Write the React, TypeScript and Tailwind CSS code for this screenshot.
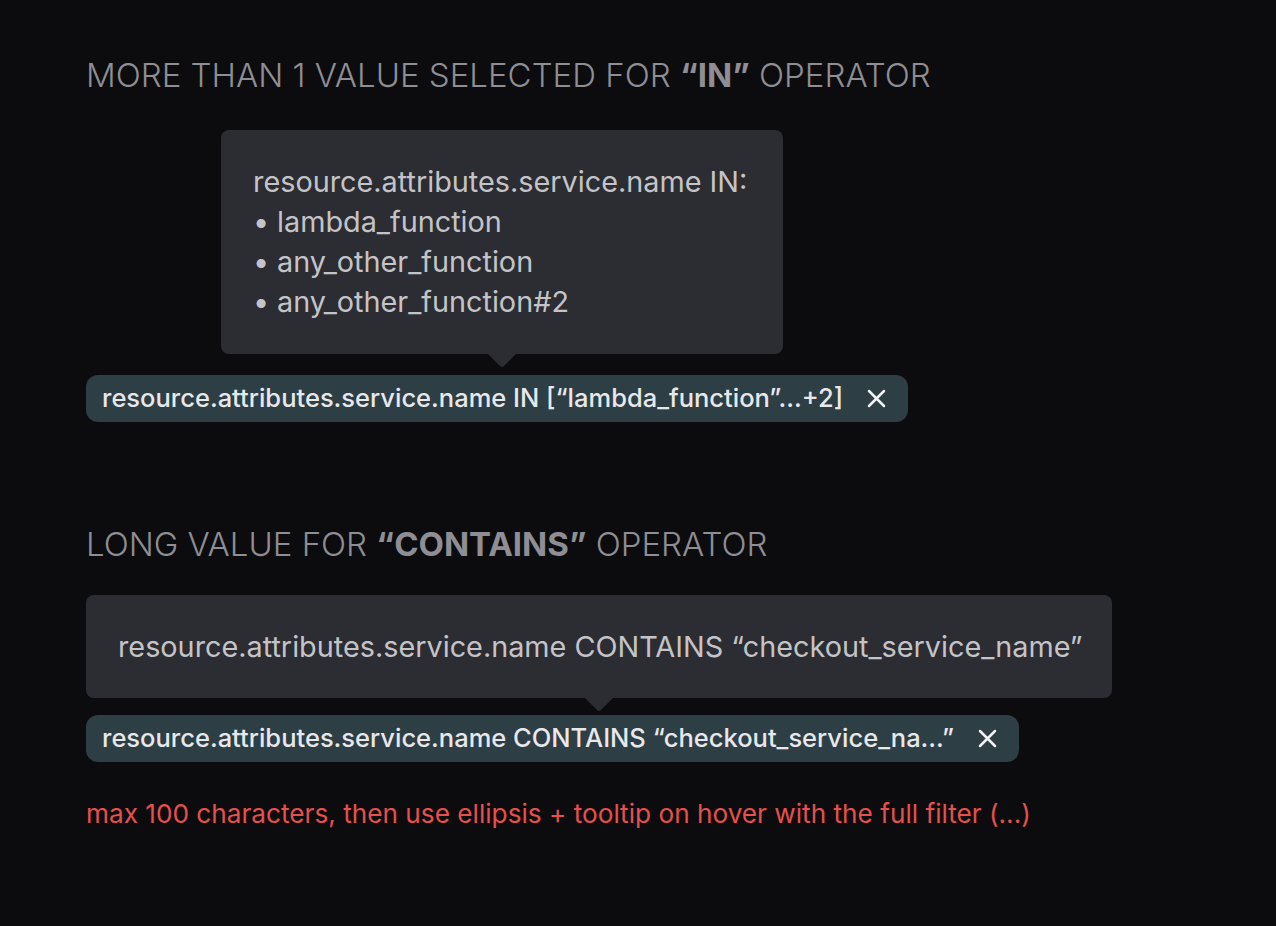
import React from 'react';

function Arrow() {
  return (
    <svg
      className="absolute left-1/2 -translate-x-1/2 top-full"
      width="28"
      height="14"
      viewBox="0 0 28 14"
    >
      <path d="M0 0 L28 0 L16 12 Q14 14 12 12 Z" fill="#2c2d32" />
    </svg>
  );
}

function CloseIcon() {
  return (
    <svg width="19" height="19" viewBox="0 0 19 19" className="shrink-0">
      <path d="M2 2 L17 17 M17 2 L2 17" stroke="#f2f2f4" strokeWidth="2.5" strokeLinecap="round" />
    </svg>
  );
}

function Chip({ children }: { children: React.ReactNode }) {
  return (
    <div className="inline-flex items-center h-[47px] rounded-[12px] bg-[#2d3e45] pl-4 pr-[22px] gap-[24px] text-[25.5px] font-medium text-[#e8e8eb] whitespace-nowrap">
      <span>{children}</span>
      <CloseIcon />
    </div>
  );
}

function Heading({ pre, bold, post }: { pre: string; bold: string; post: string }) {
  return (
    <h2 className="h-[40px] leading-[40px] text-[33px] font-light text-[#8e8e94] uppercase whitespace-nowrap">
      {pre}
      <span className="font-bold">“{bold}”</span>
      {post}
    </h2>
  );
}

export default function App() {
  const values = ['lambda_function', 'any_other_function', 'any_other_function#2'];
  return (
    <div
      className="min-h-screen w-full bg-[#0c0c0e] pl-[86px] pt-[55px]"
      style={{ fontFamily: 'Inter, "Noto Sans", sans-serif' }}
    >
      <Heading pre="More than 1 value selected for " bold="IN" post=" operator" />

      <div className="inline-flex flex-col items-center mt-[35px]">
        <div className="relative ml-[10px] w-[562px] rounded-[8px] bg-[#2c2d32] p-8 text-[28.8px] leading-[40px] text-[#c4c4c8] whitespace-nowrap">
          <div>resource.attributes.service.name IN:</div>
          {values.map((v) => (
            <div key={v} className="flex items-center">
              <span className="w-6">•</span>
              <span>{v}</span>
            </div>
          ))}
          <Arrow />
        </div>
        <div className="mt-[21px] flex">
          <Chip>resource.attributes.service.name IN [“lambda_function”...+2]</Chip>
        </div>
      </div>

      <div className="mt-[102px]">
        <Heading pre="Long value for " bold="CONTAINS" post=" operator" />
      </div>

      <div className="flex flex-col items-start mt-[31px]">
        <div className="relative w-[1026px] h-[103px] flex items-center rounded-[8px] bg-[#2c2d32] px-8 text-[28.8px] leading-[40px] text-[#c4c4c8] whitespace-nowrap">
          resource.attributes.service.name CONTAINS “checkout_service_name”
          <Arrow />
        </div>
        <div className="mt-[17px]">
          <Chip>resource.attributes.service.name CONTAINS “checkout_service_na...”</Chip>
        </div>
      </div>

      <p className="mt-[37px] h-[30px] leading-[30px] text-[26.2px] font-normal text-[#e5504c] whitespace-nowrap">
        max 100 characters, then use ellipsis + tooltip on hover with the full filter (...)
      </p>
    </div>
  );
}
